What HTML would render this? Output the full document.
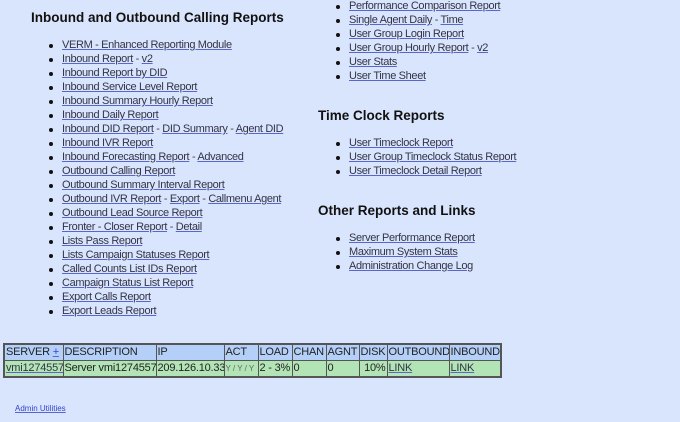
<!DOCTYPE html>
<html><head><meta charset="utf-8"><style>
body{margin:0;width:680px;height:422px;background:#d9e5fc;font-family:"Liberation Sans",Arial,sans-serif;position:relative;overflow:hidden}
.h{position:absolute;font-size:13.5px;font-weight:bold;color:#111}
ul{position:absolute;margin:0;padding:0;list-style:none;font-size:11px;letter-spacing:-0.35px}
li{height:14px;line-height:14px;position:relative;color:#444}
li:before{content:"";position:absolute;left:-13px;top:6px;width:4px;height:4px;border-radius:2px;background:#111}
a{color:#333348;text-decoration:underline;text-decoration-color:#5a66cc}
table{position:absolute;left:3px;top:343px;border-collapse:collapse;font-size:11px;border:2px solid #555;table-layout:fixed;width:497px;letter-spacing:-0.2px}
td{border:1px solid #555;padding:0 1px;height:15px;line-height:15px;white-space:nowrap;overflow:hidden;color:#222}
tr.hd td{background:#b4d0f8}
tr.dt td{background:#b2e4b6}
</style></head><body>
<div class="h" style="left:31px;top:10px">Inbound and Outbound Calling Reports</div>
<ul style="left:62px;top:38px">
<li><a>VERM - Enhanced Reporting Module</a></li>
<li><a>Inbound Report</a> - <a>v2</a></li>
<li><a>Inbound Report by DID</a></li>
<li><a>Inbound Service Level Report</a></li>
<li><a>Inbound Summary Hourly Report</a></li>
<li><a>Inbound Daily Report</a></li>
<li><a>Inbound DID Report</a> - <a>DID Summary</a> - <a>Agent DID</a></li>
<li><a>Inbound IVR Report</a></li>
<li><a>Inbound Forecasting Report</a> - <a>Advanced</a></li>
<li><a>Outbound Calling Report</a></li>
<li><a>Outbound Summary Interval Report</a></li>
<li><a>Outbound IVR Report</a> - <a>Export</a> - <a>Callmenu Agent</a></li>
<li><a>Outbound Lead Source Report</a></li>
<li><a>Fronter - Closer Report</a> - <a>Detail</a></li>
<li><a>Lists Pass Report</a></li>
<li><a>Lists Campaign Statuses Report</a></li>
<li><a>Called Counts List IDs Report</a></li>
<li><a>Campaign Status List Report</a></li>
<li><a>Export Calls Report</a></li>
<li><a>Export Leads Report</a></li>
</ul>
<ul style="left:349px;top:-1px">
<li><a>Performance Comparison Report</a></li>
<li><a>Single Agent Daily</a> - <a>Time</a></li>
<li><a>User Group Login Report</a></li>
<li><a>User Group Hourly Report</a> - <a>v2</a></li>
<li><a>User Stats</a></li>
<li><a>User Time Sheet</a></li>
</ul>
<div class="h" style="left:318px;top:108px">Time Clock Reports</div>
<ul style="left:349px;top:136px">
<li><a>User Timeclock Report</a></li>
<li><a>User Group Timeclock Status Report</a></li>
<li><a>User Timeclock Detail Report</a></li>
</ul>
<div class="h" style="left:318px;top:203px">Other Reports and Links</div>
<ul style="left:349px;top:231px">
<li><a>Server Performance Report</a></li>
<li><a>Maximum System Stats</a></li>
<li><a>Administration Change Log</a></li>
</ul>
<table>
<colgroup><col style="width:59px"><col style="width:93px"><col style="width:68px"><col style="width:34px"><col style="width:34px"><col style="width:34px"><col style="width:33px"><col style="width:28px"><col style="width:62px"><col style="width:52px"></colgroup>
<tr class="hd"><td>SERVER <a style="color:#3344cc">+</a></td><td>DESCRIPTION</td><td>IP</td><td>ACT</td><td>LOAD</td><td>CHAN</td><td>AGNT</td><td>DISK</td><td>OUTBOUND</td><td>INBOUND</td></tr>
<tr class="dt"><td><a>vmi1274557</a></td><td>Server vmi1274557</td><td>209.126.10.33</td><td style="font-size:8px;color:#666;letter-spacing:0">Y / Y / Y</td><td>2 - 3%</td><td>0</td><td>0</td><td style="text-align:right">10%</td><td><a>LINK</a></td><td><a>LINK</a></td></tr>
</table>
<a style="position:absolute;left:15px;top:404px;font-size:8px;color:#3344cc">Admin Utilities</a>
</body></html>
